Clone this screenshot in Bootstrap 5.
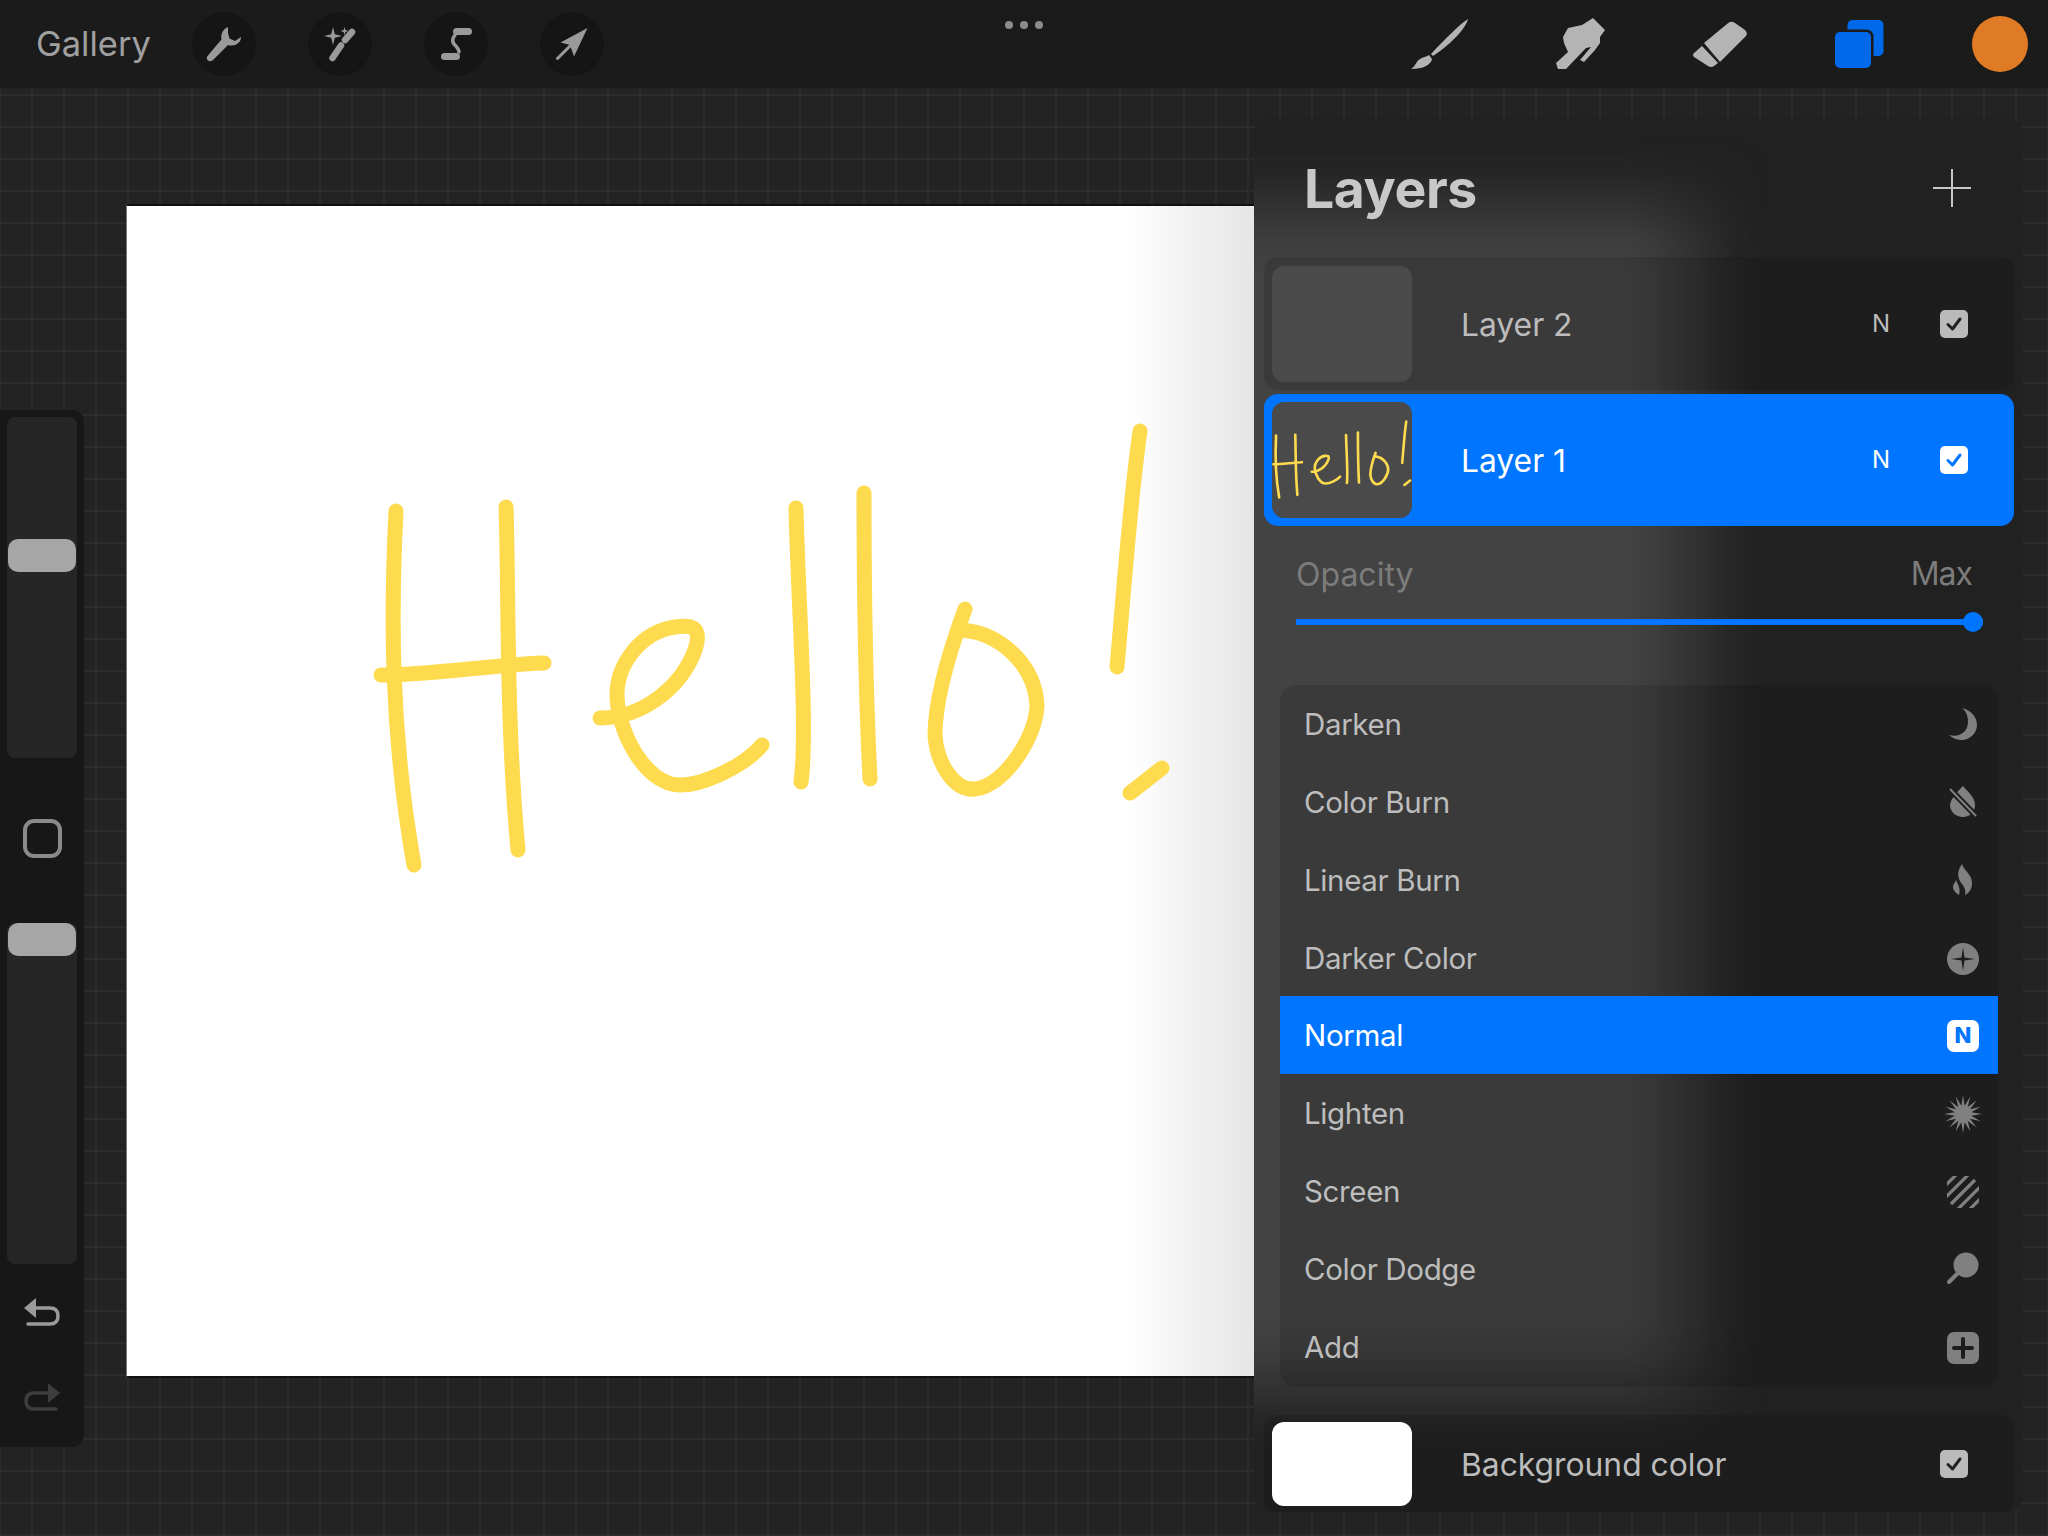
<!DOCTYPE html>
<html lang="en">
<head>
  <meta charset="UTF-8">
  <title>Layers</title>
  <link rel="stylesheet" href="https://cdn.jsdelivr.net/npm/bootstrap@5.3.0/dist/css/bootstrap.min.css">
  <style>
    html, body { height: 100%; }
    body {
      overflow: hidden;
      font-family: Inter, "Liberation Sans", sans-serif;
      background-color: #232323;
      background-image:
        linear-gradient(#2c2c2c 2px, transparent 2px),
        linear-gradient(90deg, #2c2c2c 2px, transparent 2px);
      background-size: 32px 32px;
      background-position: 0 -2px, -1px 0;
    }

    /* top toolbar */
    .topbar { height: 88px; background: #1b1b1b; padding: 0 20px 0 36px; }
    .gallery { width: 156px; font-size: 34.500px; color: #a0a0a0; }
    .tool-round { width: 64px; height: 64px; background: #151515; }
    .tool-gap { gap: 52px; }
    .tools-right { gap: 88px; }
    .dots { gap: 7px; margin-top: 21px; }
    .dots i { width: 8px; height: 8px; background: #8c8c8c; }
    .color-dot { width: 56px; height: 56px; background: #e07b25; }

    /* canvas */
    .stage { height: 1448px; padding-top: 116px; }
    .paper {
      width: 1128px;
      height: 1174px;
      margin-left: 126px;
      border-top: 2px solid #111;
      border-bottom: 2px solid #111;
      border-left: 1px solid #777;
      background: linear-gradient(90deg, #fff 89%, #f0f0f0 95%, #e6e6e6 100%);
    }
    .paper svg { width: 100%; height: 100%; }
    .ink { fill: none; stroke: #fedb4e; stroke-width: 15; stroke-linecap: round; stroke-linejoin: round; }

    /* left sidebar */
    .sidebar { left: 0; top: 322px; width: 84px; height: 1037px; background: #171717; border-radius: 0 12px 12px 0; padding-top: 7px; }
    .track { width: 70px; height: 341px; background: #262626; border-radius: 8px; padding: 0 1px; }
    .knob { height: 33px; background: #a6a6a6; border-radius: 10px; }
    .knob-size { margin-top: 122px; }
    .square-btn { width: 39px; height: 39px; border: 4px solid #8a8a8a; border-radius: 11px; margin: 61px 0 65px; }
    .undo { margin-top: 33px; }
    .redo { margin-top: 55px; }

    .layers-panel { left: 1254px; top: 30px; width: 769px; height: 1394px; background: #212121; border-radius: 16px; overflow: hidden; }
    .glow {
      inset: 0;
      background: linear-gradient(90deg,
        rgba(67, 67, 67, 1) 370px, rgba(67, 67, 67, .85) 400px, rgba(67, 67, 67, .5) 441px,
        rgba(67, 67, 67, .15) 480px, rgba(67, 67, 67, 0) 515px);
      -webkit-mask-image: linear-gradient(180deg,
        transparent 20px, rgba(0, 0, 0, .15) 55px, rgba(0, 0, 0, .5) 88px, rgba(0, 0, 0, .85) 120px, #000 155px,
        #000 1200px, rgba(0, 0, 0, .85) 1235px, rgba(0, 0, 0, .5) 1270px, rgba(0, 0, 0, .15) 1305px, transparent 1340px);
      mask-image: linear-gradient(180deg,
        transparent 20px, rgba(0, 0, 0, .15) 55px, rgba(0, 0, 0, .5) 88px, rgba(0, 0, 0, .85) 120px, #000 155px,
        #000 1200px, rgba(0, 0, 0, .85) 1235px, rgba(0, 0, 0, .5) 1270px, rgba(0, 0, 0, .15) 1305px, transparent 1340px);
    }
    .panel-body { padding: 0 9px 0 10px; }
    .panel-head { height: 139px; padding: 4px 43px 0 40px; }
    .panel-title { font-size: 53.500px; font-weight: 700; color: #c8c8c8; letter-spacing: -.4px; margin: 0; }
    .panel-head svg { margin-top: -4px; }
    .layer-row { height: 133px; margin-bottom: 4px; background: rgba(0, 0, 0, .12); border-radius: 14px; padding: 0 46px 0 8px; font-size: 31.800px; color: #bcbcbc; }
    .layer-row.selected { height: 132px; margin-bottom: 0; background: #0075ff; color: #fff; }
    .layer-row.bg-row { height: 98px; margin: 0; }
    .layer-name { padding-top: 2px; }
    .thumb { width: 140px; height: 116px; background: #4a4a4a; border-radius: 12px; margin-right: 49px; overflow: hidden; }
    .bg-row .thumb { height: 84px; background: #fff; }
    .blend-letter { font-size: 24px; margin-right: 50px; }
    .check { width: 28px; height: 28px; background: #bababa; border-radius: 5px; color: #222; }
    .selected .check { background: #fff; color: #0075ff; }

    .opacity { margin: 0 31px 0 32px; height: 159px; padding-top: 30px; }
    .opacity-label { font-size: 32px; color: #7c7c7c; line-height: 38px; padding: 0 11px 0 0; }
    .opacity-max { letter-spacing: -1px; margin-top: -1px; }
    .slider { height: 6px; background: #0075ff; margin-top: 25px; }
    .slider-thumb { right: 0; top: -7px; width: 20px; height: 20px; background: #0075ff; }

    .blend-list { margin: 0 16px 28px 16px; height: 702px; background: rgba(0, 0, 0, .12); border-radius: 16px; overflow: hidden; }
    .blend-list .list-group-item {
      height: 78px;
      background: transparent;
      border: 0;
      color: #bdbdbd;
      font-size: 29.500px;
      letter-spacing: -.35px;
      padding: 1px 17px 0 24px;
    }
    .blend-list .list-group-item.active { background: #0075ff; color: #fff; }
    .blend-icon { width: 36px; height: 36px; fill: #808080; overflow: visible; }
    .n-badge { width: 32px; height: 32px; margin-right: 2px; background: #fff; color: #0075ff; border-radius: 7px; font-size: 22px; font-weight: 800; letter-spacing: 0; }
  </style>
</head>
<body>

<!-- Toolbar -->
<nav class="topbar d-flex align-items-center justify-content-between">
  <div class="d-flex align-items-center">
    <div class="gallery">Gallery</div>
    <div class="d-flex tool-gap">
      <div class="tool-round rounded-circle">
        <svg width="64" height="64" viewBox="0 0 64 64" fill="#9a9a9a"><path d="M36 15C31 17 28.500 22 29.500 27.500L15.500 44C14 46 15 48.500 17 49C18.500 49.500 20 49 21 48L36 33C43 35 49 31 49 25L43 29L37.500 26.500L36 21Z"/></svg>
      </div>
      <div class="tool-round rounded-circle">
        <svg width="64" height="64" viewBox="0 0 64 64" fill="#9a9a9a"><path d="M25 15L26.800 22.200L34 24L26.800 25.800L25 33L23.200 25.800L16 24L23.200 22.200Z"/><path d="M36.500 15L37.400 18L40.500 19L37.400 20L36.500 23L35.600 20L32.500 19L35.600 18Z"/><path d="M24.500 46L33 33.500" stroke="#9a9a9a" stroke-width="6.500" stroke-linecap="round"/><path d="M37 28L44 20" stroke="#9a9a9a" stroke-width="6.500" stroke-linecap="round"/></svg>
      </div>
      <div class="tool-round rounded-circle">
        <svg width="64" height="64" viewBox="0 0 64 64" fill="none" stroke="#9a9a9a" stroke-linecap="round"><path d="M32.500 19.500H44.500" stroke-width="7"/><path d="M31 23Q27 28 30 32Q35 37 35 40" stroke-width="3.500"/><path d="M20.500 44.500H32.500" stroke-width="7"/></svg>
      </div>
      <div class="tool-round rounded-circle">
        <svg width="64" height="64" viewBox="0 0 64 64" fill="#9a9a9a"><path d="M47.500 16L20.500 30.500L30 33L34 44.500Z"/><path d="M32 32L17.500 46.500" stroke="#9a9a9a" stroke-width="3" stroke-linecap="round"/></svg>
      </div>
    </div>
  </div>

  <div class="dots d-flex align-self-start position-absolute start-50 translate-middle-x">
    <i class="rounded-circle"></i><i class="rounded-circle"></i><i class="rounded-circle"></i>
  </div>

  <div class="d-flex align-items-center tools-right">
    <svg width="57" height="50" viewBox="0 0 57 50" fill="#b4b4b4"><path d="M57 0C55 8 44 22 22 37L20 35C36 18 48 6 57 0Z"/><path d="M18 36L21 40C20 46 12 50 0 50C5 47 5 42 9 40C12 38 15 38 18 36Z"/></svg>
    <svg width="49" height="52" viewBox="0 0 49 52" fill="#b4b4b4"><path d="M37 0L49 12L44 19V25L39 32L28 44L24 42L35 29L30 30L10 51H2L0 45L12 34L8 25L7 19L12 10L26 7Z"/></svg>
    <svg width="54" height="46" viewBox="0 0 54 46" fill="#b4b4b4"><path d="M34 3Q38 -1 42 2L52 9Q55 12 53 15L27 41L11 22Z"/><path d="M9 25L25 42L21 45Q18 47 15 45L1 36Q-1 34 1 32Z"/></svg>
    <svg width="49" height="48" viewBox="0 0 49 48"><rect x="12.500" width="36" height="36" rx="5" fill="#0069ea"/><rect x="-2.500" y="9.500" width="41" height="41" rx="7" fill="#1b1b1b"/><rect y="12" width="36" height="36" rx="5" fill="#0069ea"/></svg>
    <div class="color-dot rounded-circle"></div>
  </div>
</nav>

<!-- Drawing area -->
<main class="stage position-relative">
  <div class="paper">
    <svg viewBox="127 206 1127 1170">
      <defs>
        <g id="hello">
          <path class="ink" d="M396 511C391 610 390 730 414 865"/>
          <path class="ink" d="M506 507C509 600 506 720 518 850"/>
          <path class="ink" stroke-width="17" d="M381 675C430 675 490 665 544 663"/>
          <path class="ink" d="M600 718C640 718 680 690 695 650C703 625 690 625 675 627C640 632 617 665 617 695C617 730 645 785 680 785C705 785 745 765 762 745"/>
          <path class="ink" d="M796 508C798 600 808 730 801 782"/>
          <path class="ink" d="M864 493C864 600 866 700 870 779"/>
          <path class="ink" d="M965 609C950 650 935 700 935 735C937 765 955 791 975 789C1005 786 1037 735 1037 705C1035 665 1000 632 960 630"/>
          <path class="ink" d="M1140 431C1130 500 1124 590 1117 667"/>
          <path class="ink" d="M1130 793L1162 768"/>
        </g>
      </defs>
      <use href="#hello"/>
    </svg>
  </div>

  <!-- Sidebar -->
  <aside class="sidebar position-absolute d-flex flex-column align-items-center">
    <div class="track"><div class="knob knob-size"></div></div>
    <div class="square-btn"></div>
    <div class="track"><div class="knob"></div></div>
    <svg class="undo" width="36" height="30" viewBox="0 0 36 30" fill="#9a9a9a"><path d="M0 11L12 1V21Z"/><path d="M12 11H26Q34 11 34 19Q34 27 26 27H4" fill="none" stroke="#9a9a9a" stroke-width="3.500" stroke-linecap="round"/></svg>
    <svg class="redo" width="36" height="30" viewBox="0 0 36 30" fill="#3d3d3d"><path d="M36 11L24 1V21Z"/><path d="M24 11H10Q2 11 2 19Q2 27 10 27H32" fill="none" stroke="#3d3d3d" stroke-width="3.500" stroke-linecap="round"/></svg>
  </aside>

  <!-- Layers panel -->
  <section class="layers-panel position-absolute">
    <div class="glow position-absolute"></div>
    <div class="panel-body position-relative">
      <div class="panel-head d-flex align-items-center justify-content-between">
        <h2 class="panel-title">Layers</h2>
        <svg width="38" height="38" viewBox="0 0 38 38" stroke="#c8c8c8" stroke-width="2"><path d="M19 0V38M0 19H38"/></svg>
      </div>

      <div class="layer-row d-flex align-items-center">
        <div class="thumb"></div>
        <span class="layer-name">Layer 2</span>
        <span class="blend-letter ms-auto">N</span>
        <span class="check d-flex align-items-center justify-content-center"><svg width="18" height="18" viewBox="0 0 18 18" fill="none" stroke="currentColor" stroke-width="3" stroke-linecap="round" stroke-linejoin="round"><path d="M3 9.500L7.500 14L15 4"/></svg></span>
      </div>

      <div class="layer-row selected d-flex align-items-center">
        <div class="thumb"><svg width="140" height="116" viewBox="373 319 800 663"><use href="#hello"/></svg></div>
        <span class="layer-name">Layer 1</span>
        <span class="blend-letter ms-auto">N</span>
        <span class="check d-flex align-items-center justify-content-center"><svg width="18" height="18" viewBox="0 0 18 18" fill="none" stroke="currentColor" stroke-width="3" stroke-linecap="round" stroke-linejoin="round"><path d="M3 9.500L7.500 14L15 4"/></svg></span>
      </div>

      <div class="opacity">
        <div class="opacity-label d-flex justify-content-between"><span>Opacity</span><span class="opacity-max">Max</span></div>
        <div class="slider position-relative"><div class="slider-thumb position-absolute rounded-circle"></div></div>
      </div>

      <div class="list-group blend-list rounded-4">
        <div class="list-group-item d-flex align-items-center justify-content-between">Darken
          <svg class="blend-icon" viewBox="0 0 36 36"><path d="M17 1C26 3 32 10 32 18C32 26 25 33 17 33C12 33 7 31 4 28C14 31 23 25 23 15C23 9 21 4 17 1Z"/></svg>
        </div>
        <div class="list-group-item d-flex align-items-center justify-content-between">Color Burn
          <svg class="blend-icon" viewBox="0 0 36 36"><path d="M18 1C22 6 30 12 30 20C30 27 25 32 18 32C11 32 5 27 5 20C5 15 12 7 18 1Z"/><path d="M3 2L33 33" stroke="#1c1c1c" stroke-width="6"/><path d="M5 4L31 31" stroke="#808080" stroke-width="2"/></svg>
        </div>
        <div class="list-group-item d-flex align-items-center justify-content-between">Linear Burn
          <svg class="blend-icon" viewBox="0 0 36 36"><path d="M17 1C19 8 27 11 27 20C27 26 24 30 20 32C21 28 20 25 17 21C13 16 11 9 17 1Z"/><path d="M11 17C13 22 16 26 14 32C11 30 8 27 8 24C8 21 10 20 11 17Z"/></svg>
        </div>
        <div class="list-group-item d-flex align-items-center justify-content-between">Darker Color
          <svg class="blend-icon" viewBox="0 0 36 36"><circle cx="18" cy="18" r="16"/><path d="M18 6L19.500 16.500L30 18L19.500 19.500L18 30L16.500 19.500L6 18L16.500 16.500Z" fill="#1c1c1c"/></svg>
        </div>
        <div class="list-group-item active d-flex align-items-center justify-content-between">Normal
          <span class="n-badge d-flex align-items-center justify-content-center">N</span>
        </div>
        <div class="list-group-item d-flex align-items-center justify-content-between">Lighten
          <svg class="blend-icon" viewBox="1 1 34 34"><polygon points="36,18 25.850,16.440 34.630,11.110 24.650,13.550 30.730,5.270 22.450,11.350 24.890,1.370 19.560,10.150 18,0 16.440,10.150 11.110,1.370 13.550,11.350 5.270,5.270 11.350,13.550 1.370,11.110 10.150,16.440 0,18 10.150,19.560 1.370,24.890 11.350,22.450 5.270,30.730 13.550,24.650 11.110,34.630 16.440,25.850 18,36 19.560,25.850 24.890,34.630 22.450,24.650 30.730,30.730 24.650,22.450 34.630,24.890 25.850,19.560"/></svg>
        </div>
        <div class="list-group-item d-flex align-items-center justify-content-between">Screen
          <svg class="blend-icon" viewBox="0 0 36 36"><defs><clipPath id="screenClip"><rect x="2" y="2" width="32" height="32" rx="5"/></clipPath></defs><g clip-path="url(#screenClip)" stroke="#808080" stroke-width="3.200"><path d="M-6 18L18 -6M0 24L24 0M6 30L30 6M12 36L36 12M18 42L42 18"/></g></svg>
        </div>
        <div class="list-group-item d-flex align-items-center justify-content-between">Color Dodge
          <svg class="blend-icon" viewBox="0 0 36 36"><circle cx="21" cy="13" r="12.500"/><path d="M4 30L12 22" stroke="#808080" stroke-width="4" stroke-linecap="round"/></svg>
        </div>
        <div class="list-group-item d-flex align-items-center justify-content-between">Add
          <svg class="blend-icon" viewBox="0 0 36 36"><rect x="2" y="2" width="32" height="32" rx="7"/><path d="M18 9V27M9 18H27" stroke="#1c1c1c" stroke-width="4" stroke-linecap="round"/></svg>
        </div>
      </div>

      <div class="layer-row bg-row d-flex align-items-center">
        <div class="thumb"></div>
        <span class="layer-name">Background color</span>
        <span class="check d-flex align-items-center justify-content-center ms-auto"><svg width="18" height="18" viewBox="0 0 18 18" fill="none" stroke="currentColor" stroke-width="3" stroke-linecap="round" stroke-linejoin="round"><path d="M3 9.500L7.500 14L15 4"/></svg></span>
      </div>
    </div>
  </section>
</main>

<script src="https://cdn.jsdelivr.net/npm/bootstrap@5.3.0/dist/js/bootstrap.bundle.min.js"></script>
</body>
</html>
